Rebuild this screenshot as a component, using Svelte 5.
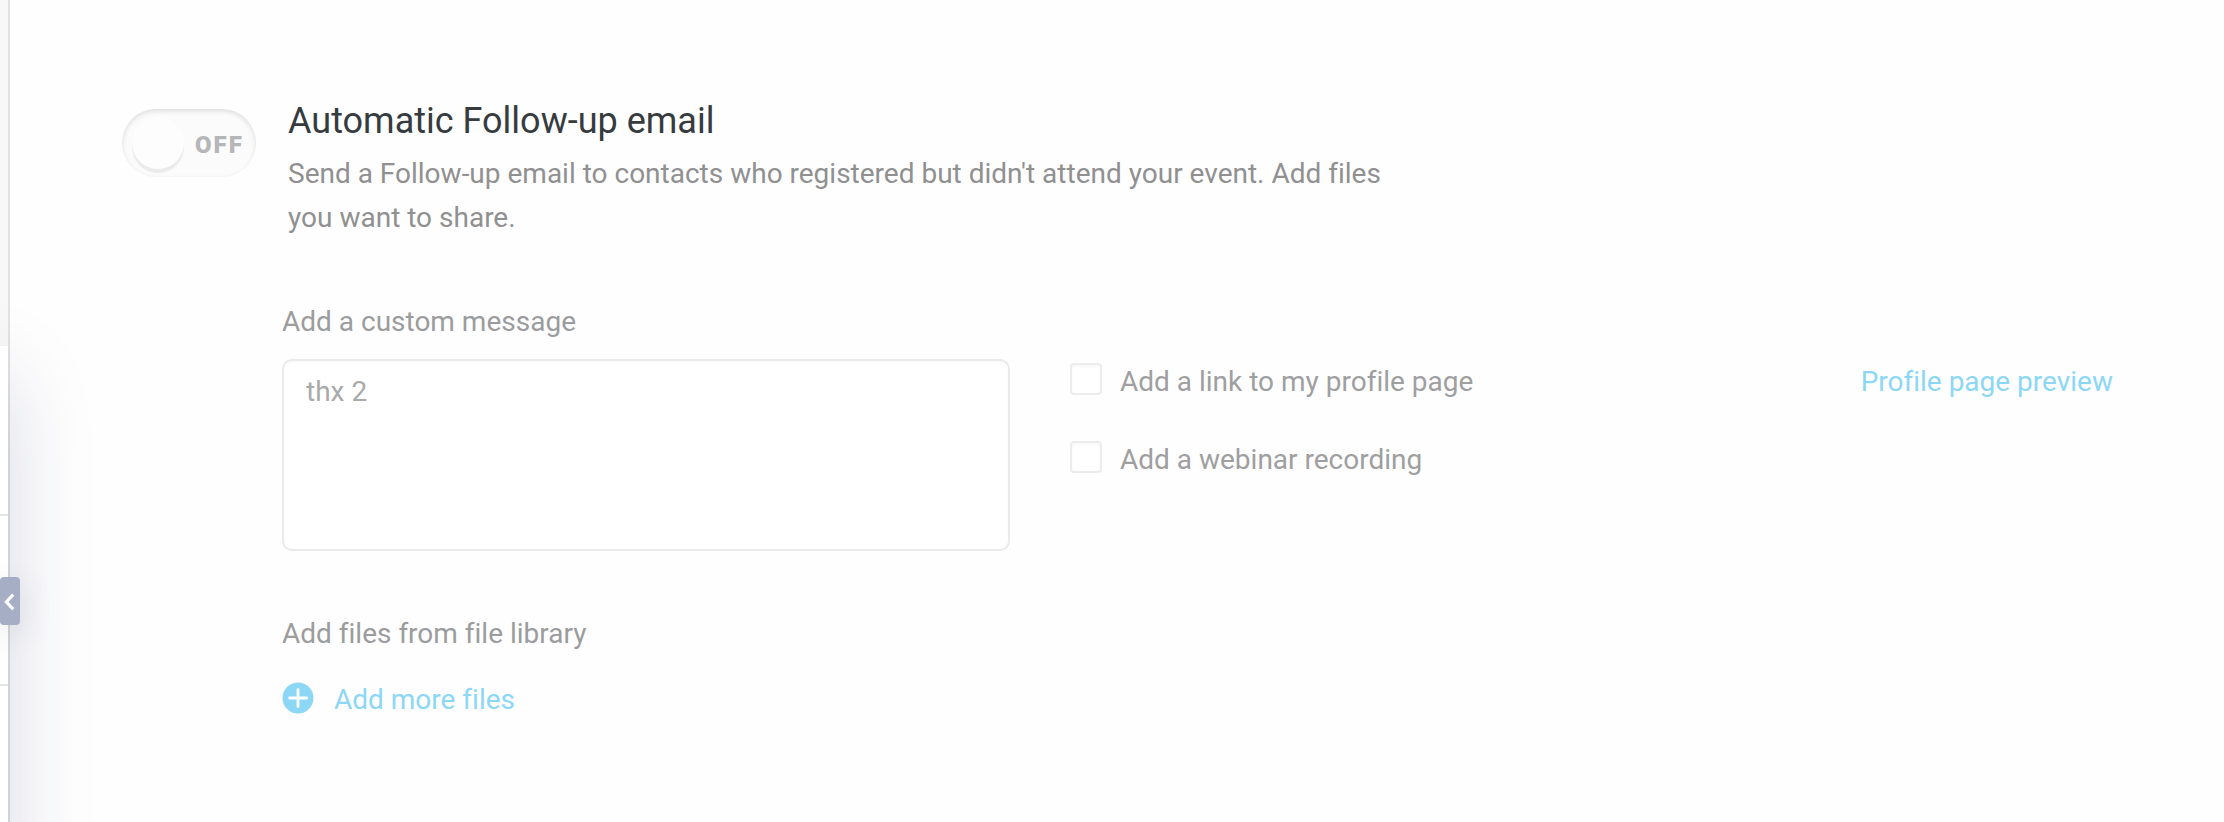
<script>
  let enabled = $state(false);
  let message = $state('thx 2');
  let options = $state([
    { label: 'Add a link to my profile page', checked: false },
    { label: 'Add a webinar recording', checked: false }
  ]);
</script>

<div class="page">
  <aside class="sidebar">
    <div class="panel">
      <div class="row first"></div>
      <div class="row"></div>
      <div class="row last"></div>
    </div>
    <button class="collapse" aria-label="Collapse">
      <svg width="20" height="48" viewBox="0 0 20 48">
        <path d="M13.2 17.5 L6.4 25 L13.2 32.2" fill="none" stroke="#fff" stroke-width="3.2" />
      </svg>
    </button>
  </aside>

  <main>
    <header>
      <button class="switch" aria-pressed={enabled} onclick={() => (enabled = !enabled)}>
        <span class="knob"></span>
        <span class="state">{enabled ? 'ON' : 'OFF'}</span>
      </button>
      <div class="intro">
        <h2>Automatic Follow-up email</h2>
        <p>Send a Follow-up email to contacts who registered but didn't attend your event. Add files you want to share.</p>
      </div>
    </header>

    <section class="settings">
      <div class="label">Add a custom message</div>
      <div class="columns">
        <textarea bind:value={message} spellcheck="false"></textarea>
        <div class="options">
          {#each options as option}
            <label>
              <input type="checkbox" bind:checked={option.checked} />
              <span>{option.label}</span>
            </label>
          {/each}
        </div>
        <span class="link preview">Profile page preview</span>
      </div>
      <div class="label files">Add files from file library</div>
      <div class="link add">
        <svg width="32" height="32" viewBox="0 0 32 32">
          <circle cx="16" cy="16" r="15.5" fill="#8cd7f6" />
          <path d="M7.7 16H24.7M16 7.7V24.5" stroke="#fff" stroke-width="2.8" stroke-linecap="round" />
        </svg>
        <span>Add more files</span>
      </div>
    </section>
  </main>
</div>

<style>
  :global(body) {
    background: #fefefe;
  }
  .page {
    display: flex;
    width: 2224px;
    height: 822px;
    overflow: hidden;
    background: #fefefe;
    font-family: Roboto, sans-serif;
    font-size: 28px;
    font-variant-ligatures: none;
    line-height: 44px;
    color: #9b9c9d;
  }
  .sidebar {
    position: relative;
    z-index: 1;
    flex: none;
    width: 8px;
    height: 822px;
    padding-top: 346px;
    box-sizing: border-box;
    background: #f8f8f8;
  }
  .panel {
    width: 408px;
    height: 800px;
    margin-left: -400px;
    background: #fff;
    box-shadow: 0 32px 80px rgba(34, 44, 98, 0.17);
  }
  .row {
    box-sizing: border-box;
    height: 170px;
    border-bottom: 2px solid #e1e2ea;
  }
  .row.last {
    border: 0;
  }
  .collapse {
    position: absolute;
    left: 0;
    top: 577px;
    width: 20px;
    height: 48px;
    padding: 0;
    border: 0;
    border-radius: 4px;
    background: #a6aec6;
    box-shadow: 0 8px 32px rgba(60, 70, 110, 0.16);
  }
  .collapse svg {
    display: block;
  }
  main {
    flex: 1;
    box-sizing: border-box;
    border-left: 2px solid #e2e2e2;
    padding: 99px 111px 0 112px;
  }
  header {
    display: flex;
    gap: 32px;
  }
  .switch {
    display: flex;
    align-items: center;
    box-sizing: border-box;
    width: 134px;
    height: 68px;
    margin-top: 10px;
    padding: 0 0 0 10px;
    border: 0;
    border-radius: 34px;
    background: #fbfbfb;
    box-shadow: inset 0 2px 5px rgba(0, 0, 0, 0.12);
  }
  .knob {
    flex: none;
    width: 52px;
    height: 52px;
    border-radius: 50%;
    background: #fdfdfd;
    box-shadow: 0 4px 0 #ebebeb;
  }
  .state {
    margin: 4px 0 0 11px;
    font: 900 24px/28px Roboto, sans-serif;
    letter-spacing: 2px;
    color: #b5b6b7;
  }
  h2 {
    margin: 0 0 9px;
    font-size: 36px;
    font-weight: 400;
    line-height: 44px;
    color: #363b3f;
  }
  p {
    width: 1110px;
    margin: 0;
    color: #909091;
  }
  .settings {
    padding-left: 160px;
  }
  .label {
    margin-top: 60px;
  }
  .columns {
    display: flex;
    align-items: flex-start;
    margin-top: 15px;
  }
  textarea {
    display: block;
    flex: none;
    box-sizing: border-box;
    width: 728px;
    height: 192px;
    padding: 9px 22px;
    border: 2px solid #e9eaea;
    border-radius: 10px;
    outline: 0;
    resize: none;
    background: #fff;
    box-shadow: inset 0 2px 3px rgba(0, 0, 0, 0.025);
    font: inherit;
    color: #a9aaaa;
  }
  .options {
    display: flex;
    flex-direction: column;
    gap: 33px;
    padding: 0 0 0 60px;
  }
  label {
    display: flex;
    gap: 18px;
  }
  label span {
    padding-top: 1px;
    color: #9e9fa0;
  }
  input {
    appearance: none;
    box-sizing: border-box;
    width: 32px;
    height: 32px;
    margin: 4px 0 0;
    border: 2px solid #ececec;
    border-radius: 4px;
    background: #fff;
    box-shadow: inset 0 2px 3px rgba(0, 0, 0, 0.03);
  }
  .link {
    color: #8cd7f6;
  }
  .preview {
    margin: 1px 0 0 auto;
  }
  .label.files {
    margin-top: 61px;
  }
  .add {
    display: flex;
    align-items: flex-start;
    gap: 20px;
    margin-top: 22px;
  }
  .add svg {
    margin-top: 4px;
  }
</style>
